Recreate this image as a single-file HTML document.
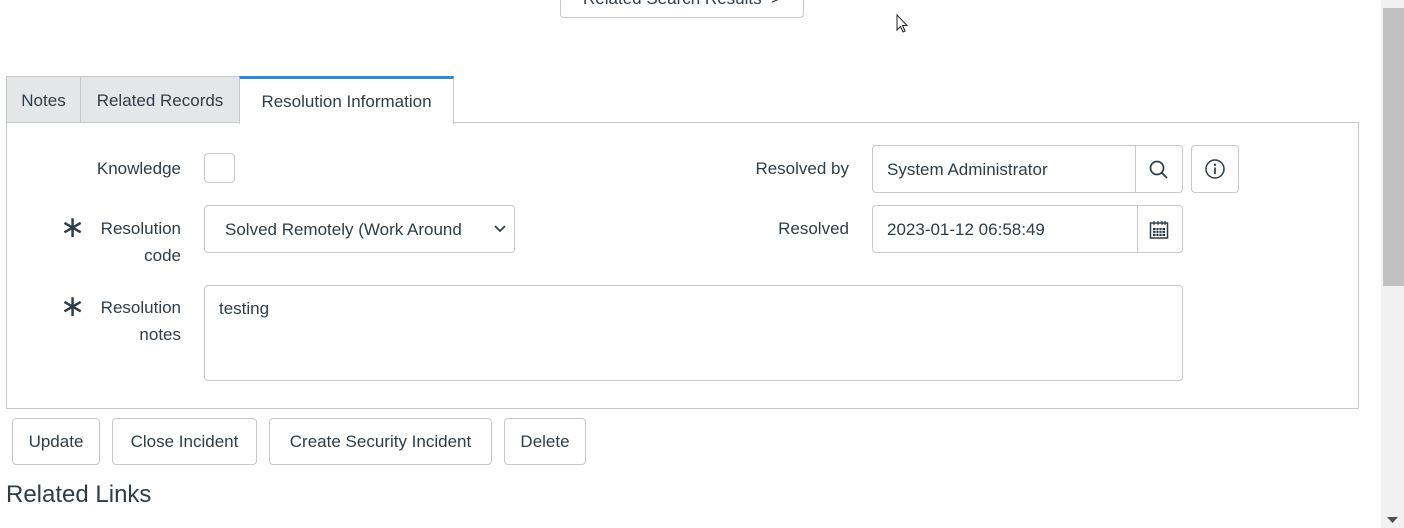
<!DOCTYPE html>
<html><head><style>
*{box-sizing:border-box;margin:0;padding:0}
body{width:1404px;height:528px;overflow:hidden;background:#fff;font-family:"Liberation Sans",sans-serif;color:#2e3d49;font-size:17px;position:relative}
.a{position:absolute}
.box{position:absolute;border:1px solid #c6c9cc;border-radius:4px;background:#fff}
.lbl{position:absolute;text-align:right;line-height:27px;font-size:17px}
.tab{position:absolute;top:76px;height:47px;background:#e4e6e8;border:1px solid #c6c9cc;line-height:48px;text-align:center;font-size:17px}
.btn{position:absolute;top:418px;height:47px;border:1px solid #c6c9cc;border-radius:4px;line-height:45px;text-align:center;font-size:17px;background:#fff}
</style></head><body>
<div class="box" style="left:560px;top:-20px;width:244px;height:38px"></div>
<div class="a" style="left:560px;top:-11px;width:244px;text-align:center;line-height:20px;color:#2e3d49;font-size:17px;white-space:nowrap">Related Search Results &nbsp;&gt;</div>
<svg class="a" style="left:896px;top:14px" width="12" height="20" viewBox="0 0 12 20"><path d="M1 1 L1 16 L4.5 12.5 L7 18 L9 17 L6.5 11.5 L11 11.5 Z" fill="#fff" stroke="#222" stroke-width="1"/></svg>

<div class="a" style="left:6px;top:122px;width:1353px;height:287px;border:1px solid #c6c9cc"></div>
<div class="tab" style="left:6px;width:75px">Notes</div>
<div class="tab" style="left:80px;width:160px">Related Records</div>
<div class="tab" style="left:239px;width:215px;background:#fff;border-top:3px solid #2b8ae0;border-bottom:none;height:48px;line-height:46px">Resolution Information</div>

<div class="lbl" style="left:20px;top:155px;width:161px">Knowledge</div>
<div class="box" style="left:204px;top:153px;width:31px;height:30px"></div>

<div class="a" style="left:60px;top:213px;font-size:30px;line-height:30px">∗</div>
<div class="lbl" style="left:20px;top:215px;width:161px">Resolution<br>code</div>
<div class="box" style="left:204px;top:205px;width:311px;height:48px;line-height:47px;padding-left:20px;white-space:nowrap;overflow:hidden">Solved Remotely (Work Around</div>
<svg class="a" style="left:493px;top:224px" width="14" height="10"><path d="M2 2 L7 7 L12 2" fill="none" stroke="#2e3d49" stroke-width="1.8"/></svg>

<div class="a" style="left:60px;top:292px;font-size:30px;line-height:30px">∗</div>
<div class="lbl" style="left:20px;top:294px;width:161px">Resolution<br>notes</div>
<div class="box" style="left:204px;top:285px;width:979px;height:96px;padding:10px 14px;line-height:26px">testing</div>

<div class="lbl" style="left:650px;top:155px;width:199px">Resolved by</div>
<div class="box" style="left:872px;top:145px;width:311px;height:48px;line-height:47px;padding-left:14px">System Administrator</div>
<div class="a" style="left:1135px;top:146px;width:1px;height:46px;background:#c6c9cc"></div>
<svg class="a" style="left:1148px;top:159px" width="22" height="22"><circle cx="9" cy="9" r="6.5" fill="none" stroke="#2e3d49" stroke-width="1.7"/><path d="M13.5 13.5 L19 19" stroke="#2e3d49" stroke-width="1.8"/></svg>
<div class="box" style="left:1191px;top:145px;width:48px;height:48px"></div>
<svg class="a" style="left:1204px;top:158px" width="22" height="22"><circle cx="11" cy="11" r="9" fill="none" stroke="#2e3d49" stroke-width="1.5"/><circle cx="11" cy="6.8" r="1.2" fill="#2e3d49"/><path d="M11 9.5 V16" stroke="#2e3d49" stroke-width="1.7"/></svg>

<div class="lbl" style="left:650px;top:215px;width:199px">Resolved</div>
<div class="box" style="left:872px;top:205px;width:311px;height:48px;line-height:47px;padding-left:14px">2023-01-12 06:58:49</div>
<div class="a" style="left:1137px;top:206px;width:1px;height:46px;background:#c6c9cc"></div>
<svg class="a" style="left:1149px;top:220px" width="20" height="20"><rect x="1.5" y="3" width="17" height="15" fill="none" stroke="#2e3d49" stroke-width="1.5"/><path d="M5 1V5M9 1V5M13 1V5M16 1V5" stroke="#2e3d49" stroke-width="1.2"/><rect x="4" y="8" width="12" height="8" fill="#2e3d49"/><path d="M4 10.5H16M4 13.3H16M7 8V16M10 8V16M13 8V16" stroke="#fff" stroke-width="0.8"/></svg>

<div class="btn" style="left:12px;width:88px">Update</div>
<div class="btn" style="left:112px;width:145px">Close Incident</div>
<div class="btn" style="left:269px;width:223px">Create Security Incident</div>
<div class="btn" style="left:504px;width:82px">Delete</div>

<div class="a" style="left:6px;top:480px;font-size:24px;line-height:30px">Related Links</div>

<div class="a" style="left:1381px;top:0;width:23px;height:528px;background:#f1f1f1"></div>
<div class="a" style="left:1383px;top:8px;width:21px;height:278px;background:#c1c1c1"></div>
<svg class="a" style="left:1387px;top:517px" width="12" height="8"><path d="M0 0H11L5.5 6Z" fill="#505050"/></svg>
</body></html>
